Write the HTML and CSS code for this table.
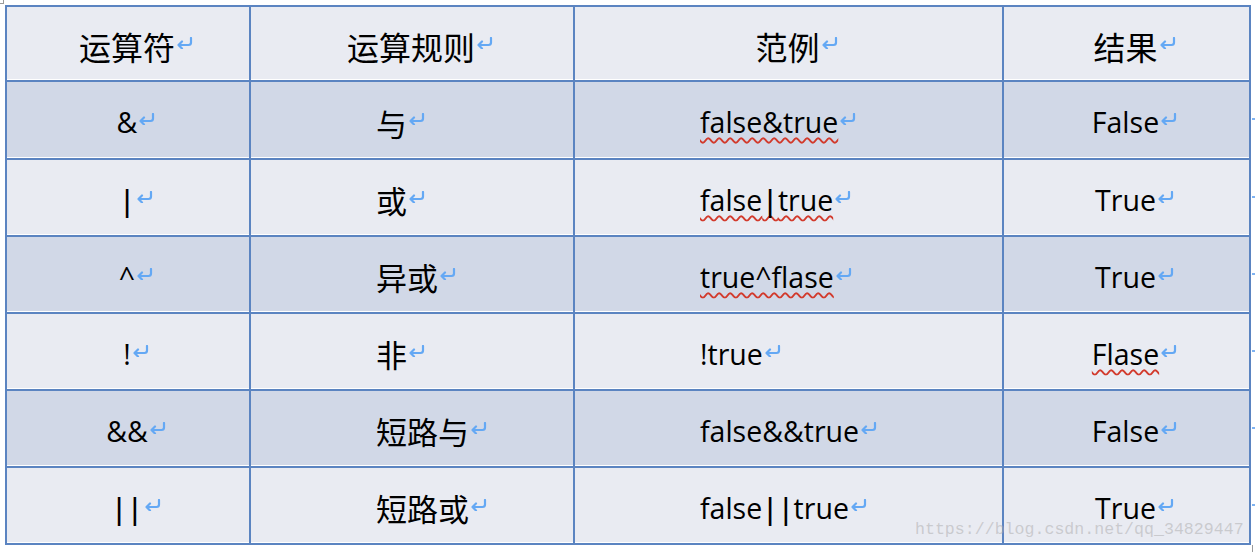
FILE: index.html
```html
<!DOCTYPE html>
<html lang="zh-CN">
<head>
<meta charset="utf-8">
<title>运算符</title>
<link rel="stylesheet" href="styles.css">
</head>
<body>
<div class="corner-tl"></div>
<div class="page">
  <div class="grid">
    <div class="cell head c"><span class="zh">运算符</span><svg class="ret" viewBox="0 0 17 12"><path d="M15 1V5.5Q15 8 12.5 8H2.5M6 4.5L2.5 8L6 11.5"/></svg></div>
    <div class="cell head c"><span class="zh">运算规则</span><svg class="ret" viewBox="0 0 17 12"><path d="M15 1V5.5Q15 8 12.5 8H2.5M6 4.5L2.5 8L6 11.5"/></svg></div>
    <div class="cell head c"><span class="zh">范例</span><svg class="ret" viewBox="0 0 17 12"><path d="M15 1V5.5Q15 8 12.5 8H2.5M6 4.5L2.5 8L6 11.5"/></svg></div>
    <div class="cell head c"><span class="zh">结果</span><svg class="ret" viewBox="0 0 17 12"><path d="M15 1V5.5Q15 8 12.5 8H2.5M6 4.5L2.5 8L6 11.5"/></svg></div>

    <div class="cell odd c">&amp;<svg class="ret" viewBox="0 0 17 12"><path d="M15 1V5.5Q15 8 12.5 8H2.5M6 4.5L2.5 8L6 11.5"/></svg></div>
    <div class="cell odd l"><span class="zh">与</span><svg class="ret" viewBox="0 0 17 12"><path d="M15 1V5.5Q15 8 12.5 8H2.5M6 4.5L2.5 8L6 11.5"/></svg></div>
    <div class="cell odd l"><span class="spell">false&amp;true</span><svg class="ret" viewBox="0 0 17 12"><path d="M15 1V5.5Q15 8 12.5 8H2.5M6 4.5L2.5 8L6 11.5"/></svg></div>
    <div class="cell odd c">False<svg class="ret" viewBox="0 0 17 12"><path d="M15 1V5.5Q15 8 12.5 8H2.5M6 4.5L2.5 8L6 11.5"/></svg></div>

    <div class="cell even c"><span class="pipe">|</span><svg class="ret" viewBox="0 0 17 12"><path d="M15 1V5.5Q15 8 12.5 8H2.5M6 4.5L2.5 8L6 11.5"/></svg></div>
    <div class="cell even l"><span class="zh">或</span><svg class="ret" viewBox="0 0 17 12"><path d="M15 1V5.5Q15 8 12.5 8H2.5M6 4.5L2.5 8L6 11.5"/></svg></div>
    <div class="cell even l"><span class="spell">false<span class="pipe">|</span>true</span><svg class="ret" viewBox="0 0 17 12"><path d="M15 1V5.5Q15 8 12.5 8H2.5M6 4.5L2.5 8L6 11.5"/></svg></div>
    <div class="cell even c">True<svg class="ret" viewBox="0 0 17 12"><path d="M15 1V5.5Q15 8 12.5 8H2.5M6 4.5L2.5 8L6 11.5"/></svg></div>

    <div class="cell odd c">^<svg class="ret" viewBox="0 0 17 12"><path d="M15 1V5.5Q15 8 12.5 8H2.5M6 4.5L2.5 8L6 11.5"/></svg></div>
    <div class="cell odd l"><span class="zh">异或</span><svg class="ret" viewBox="0 0 17 12"><path d="M15 1V5.5Q15 8 12.5 8H2.5M6 4.5L2.5 8L6 11.5"/></svg></div>
    <div class="cell odd l"><span class="spell">true^flase</span><svg class="ret" viewBox="0 0 17 12"><path d="M15 1V5.5Q15 8 12.5 8H2.5M6 4.5L2.5 8L6 11.5"/></svg></div>
    <div class="cell odd c">True<svg class="ret" viewBox="0 0 17 12"><path d="M15 1V5.5Q15 8 12.5 8H2.5M6 4.5L2.5 8L6 11.5"/></svg></div>

    <div class="cell even c">!<svg class="ret" viewBox="0 0 17 12"><path d="M15 1V5.5Q15 8 12.5 8H2.5M6 4.5L2.5 8L6 11.5"/></svg></div>
    <div class="cell even l"><span class="zh">非</span><svg class="ret" viewBox="0 0 17 12"><path d="M15 1V5.5Q15 8 12.5 8H2.5M6 4.5L2.5 8L6 11.5"/></svg></div>
    <div class="cell even l">!true<svg class="ret" viewBox="0 0 17 12"><path d="M15 1V5.5Q15 8 12.5 8H2.5M6 4.5L2.5 8L6 11.5"/></svg></div>
    <div class="cell even c"><span class="spell">Flase</span><svg class="ret" viewBox="0 0 17 12"><path d="M15 1V5.5Q15 8 12.5 8H2.5M6 4.5L2.5 8L6 11.5"/></svg></div>

    <div class="cell odd c">&amp;&amp;<svg class="ret" viewBox="0 0 17 12"><path d="M15 1V5.5Q15 8 12.5 8H2.5M6 4.5L2.5 8L6 11.5"/></svg></div>
    <div class="cell odd l"><span class="zh">短路与</span><svg class="ret" viewBox="0 0 17 12"><path d="M15 1V5.5Q15 8 12.5 8H2.5M6 4.5L2.5 8L6 11.5"/></svg></div>
    <div class="cell odd l">false&amp;&amp;true<svg class="ret" viewBox="0 0 17 12"><path d="M15 1V5.5Q15 8 12.5 8H2.5M6 4.5L2.5 8L6 11.5"/></svg></div>
    <div class="cell odd c">False<svg class="ret" viewBox="0 0 17 12"><path d="M15 1V5.5Q15 8 12.5 8H2.5M6 4.5L2.5 8L6 11.5"/></svg></div>

    <div class="cell even c"><span class="pipe">||</span><svg class="ret" viewBox="0 0 17 12"><path d="M15 1V5.5Q15 8 12.5 8H2.5M6 4.5L2.5 8L6 11.5"/></svg></div>
    <div class="cell even l"><span class="zh">短路或</span><svg class="ret" viewBox="0 0 17 12"><path d="M15 1V5.5Q15 8 12.5 8H2.5M6 4.5L2.5 8L6 11.5"/></svg></div>
    <div class="cell even l">false<span class="pipe">||</span>true<svg class="ret" viewBox="0 0 17 12"><path d="M15 1V5.5Q15 8 12.5 8H2.5M6 4.5L2.5 8L6 11.5"/></svg></div>
    <div class="cell even c">True<svg class="ret" viewBox="0 0 17 12"><path d="M15 1V5.5Q15 8 12.5 8H2.5M6 4.5L2.5 8L6 11.5"/></svg></div>
  </div>
  <div class="marks">
    <div class="mark h"></div>
    <div class="mark r1"><span class="tip"></span></div>
    <div class="mark r"><span class="tip"></span></div>
    <div class="mark r"><span class="tip"></span></div>
    <div class="mark r"><span class="tip"></span></div>
    <div class="mark r"><span class="tip"></span></div>
    <div class="mark r"><span class="tip"></span></div>
    <div class="corner-br"></div>
  </div>
  <div class="watermark">https://blog.csdn.net/qq_34829447</div>
</div>
</body>
</html>
```
FILE: styles.css
```css
html, body {
  margin: 0;
  padding: 0;
  background: #ffffff;
}
body {
  width: 1256px;
  height: 552px;
  overflow: hidden;
  position: relative;
}
.corner-tl {
  position: absolute;
  left: 0;
  top: 0;
  width: 3px;
  height: 3px;
  border-right: 1px solid #9a9a9a;
  border-bottom: 1px solid #9a9a9a;
}
.page {
  display: flex;
  align-items: flex-start;
  padding: 5px 0 0 5px;
  position: relative;
}
.grid {
  display: grid;
  grid-template-columns: 242px 322px 427px 245px;
  grid-template-rows: 73px 76px 75px 75px 75px 75px 75px;
  gap: 2px;
  padding: 2px;
  background: #5b84c1;
}
.cell {
  display: flex;
  align-items: center;
  box-shadow: inset 0 -1px 0 #ffffff;
  font-family: "Open Sans", "Noto Sans CJK SC", sans-serif;
  font-size: 28.5px;
  color: #000;
  padding-top: 4px;
  box-sizing: border-box;
  white-space: nowrap;
}
.head, .even {
  background: #e9ebf2;
}
.odd {
  background: #d1d8e7;
}
.c {
  justify-content: center;
  padding-left: 16px;
}
.l {
  justify-content: flex-start;
  padding-left: 125px;
}
.zh {
  font-family: "Noto Sans CJK SC", sans-serif;
  font-size: 31px;
  line-height: 1;
}
.head .zh {
  font-size: 32px;
}
.pipe {
  font-weight: 600;
}
.spell {
  text-decoration: underline wavy #d23a2c;
  text-decoration-thickness: 1.5px;
  text-underline-offset: 4px;
  text-decoration-skip-ink: none;
}
.ret {
  width: 17px;
  height: 12px;
  margin-left: 1px;
  margin-top: -6px;
  fill: none;
  stroke: #64a8f4;
  stroke-width: 2.2;
  stroke-linecap: round;
  stroke-linejoin: round;
  flex: none;
}
.marks {
  display: flex;
  flex-direction: column;
  padding-top: 2px;
  width: 5px;
}
.mark {
  height: 75px;
  margin-bottom: 2px;
  position: relative;
}
.mark.h {
  height: 73px;
}
.mark.r1 {
  height: 76px;
}
.tip {
  position: absolute;
  left: 1px;
  top: 36px;
  width: 3px;
  height: 2px;
  background: #7fb2f0;
}
.corner-br {
  width: 1px;
  height: 8px;
  margin-left: 1px;
  background: #9a9a9a;
}
.watermark {
  position: absolute;
  left: 915px;
  top: 520px;
  font-family: "Liberation Mono", monospace;
  font-size: 16.6px;
  color: rgba(170, 170, 170, 0.5);
  white-space: nowrap;
}
```
